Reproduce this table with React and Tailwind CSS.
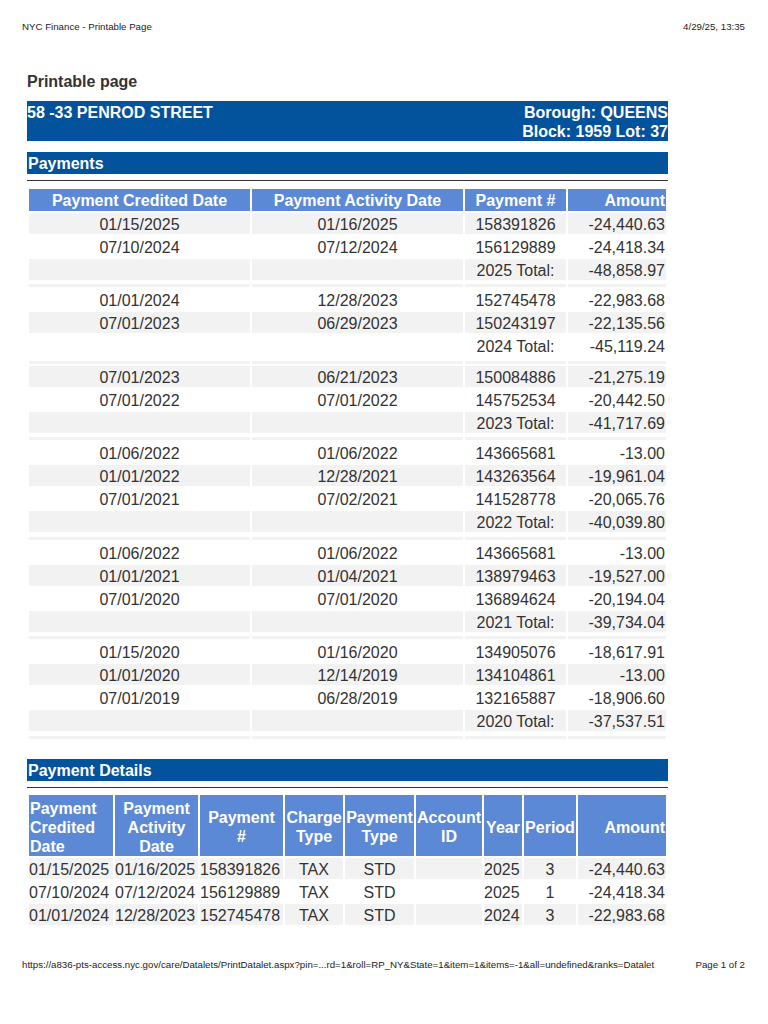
import React from 'react';

const groups = [
  {
    year: '2025',
    total: '-48,858.97',
    rows: [
      ['01/15/2025', '01/16/2025', '158391826', '-24,440.63'],
      ['07/10/2024', '07/12/2024', '156129889', '-24,418.34'],
    ],
    start: 'gray',
    gap: 'h-[5px]',
  },
  {
    year: '2024',
    total: '-45,119.24',
    rows: [
      ['01/01/2024', '12/28/2023', '152745478', '-22,983.68'],
      ['07/01/2023', '06/29/2023', '150243197', '-22,135.56'],
    ],
    start: 'white',
    gap: 'h-[6px]',
  },
  {
    year: '2023',
    total: '-41,717.69',
    rows: [
      ['07/01/2023', '06/21/2023', '150084886', '-21,275.19'],
      ['07/01/2022', '07/01/2022', '145752534', '-20,442.50'],
    ],
    start: 'gray',
    gap: 'h-[5px]',
  },
  {
    year: '2022',
    total: '-40,039.80',
    rows: [
      ['01/06/2022', '01/06/2022', '143665681', '-13.00'],
      ['01/01/2022', '12/28/2021', '143263564', '-19,961.04'],
      ['07/01/2021', '07/02/2021', '141528778', '-20,065.76'],
    ],
    start: 'white',
    gap: 'h-[6px]',
  },
  {
    year: '2021',
    total: '-39,734.04',
    rows: [
      ['01/06/2022', '01/06/2022', '143665681', '-13.00'],
      ['01/01/2021', '01/04/2021', '138979463', '-19,527.00'],
      ['07/01/2020', '07/01/2020', '136894624', '-20,194.04'],
    ],
    start: 'white',
    gap: 'h-[5px]',
  },
  {
    year: '2020',
    total: '-37,537.51',
    rows: [
      ['01/15/2020', '01/16/2020', '134905076', '-18,617.91'],
      ['01/01/2020', '12/14/2019', '134104861', '-13.00'],
      ['07/01/2019', '06/28/2019', '132165887', '-18,906.60'],
    ],
    start: 'white',
    gap: 'h-[6px]',
  },
];

const details = [
  ['01/15/2025', '01/16/2025', '158391826', 'TAX', 'STD', '', '2025', '3', '-24,440.63'],
  ['07/10/2024', '07/12/2024', '156129889', 'TAX', 'STD', '', '2025', '1', '-24,418.34'],
  ['01/01/2024', '12/28/2023', '152745478', 'TAX', 'STD', '', '2024', '3', '-22,983.68'],
];

// dark blue title strip with the thin rule under it
const SectionBar = ({ title }) => (
  <div>
    <div className="h-[22px] bg-[#03529c] text-white font-bold text-[16px] leading-[20px] pt-[2px] pl-px">
      {title}
    </div>
    <div className="mt-[6px] border-t border-[#333333]"></div>
  </div>
);

const PaymentsTable = () => {
  const body = [];
  groups.forEach((g) => {
    let gray = g.start === 'gray';
    g.rows.forEach((r, i) => {
      const bg = gray ? 'bg-[#f2f2f2]' : 'bg-white';
      body.push(
        <tr key={g.year + i} className="h-[21px] leading-[19px]">
          <td className={`${bg} text-center pt-[2px]`}>{r[0]}</td>
          <td className={`${bg} text-center pt-[2px]`}>{r[1]}</td>
          <td className={`${bg} text-center pt-[2px]`}>{r[2]}</td>
          <td className={`${bg} text-right pr-[1px] pt-[2px]`}>{r[3]}</td>
        </tr>
      );
      gray = !gray;
    });
    const tbg = gray ? 'bg-[#f2f2f2]' : 'bg-white';
    body.push(
      <tr key={g.year + 't'} className="h-[21px] leading-[19px]">
        <td className={tbg}></td>
        <td className={tbg}></td>
        <td className={`${tbg} text-center pt-[2px]`}>{g.year} Total:</td>
        <td className={`${tbg} text-right pr-[1px] pt-[2px]`}>{g.total}</td>
      </tr>
    );
    body.push(
      <tr key={g.year + 's'}>
        {[0, 1, 2, 3].map((c) => (
          <td key={c} className={`p-0 ${g.gap}`}>
            <div className={`${g.gap} flex flex-col justify-end`}>
              <div className="h-[3px] bg-[#f2f2f2]"></div>
            </div>
          </td>
        ))}
      </tr>
    );
  });

  return (
    <table className="mt-[6px] w-[641px] table-fixed border-separate border-spacing-[2px] text-[16px] text-[#333333]">
      <colgroup>
        <col className="w-[221px]" />
        <col className="w-[211px]" />
        <col className="w-[101px]" />
        <col className="w-[98px]" />
      </colgroup>
      <thead>
        <tr className="h-[22px] leading-[20px] text-white font-bold">
          <th className="bg-[#5b89d6] text-center pt-[2px]">Payment Credited Date</th>
          <th className="bg-[#5b89d6] text-center pt-[2px]">Payment Activity Date</th>
          <th className="bg-[#5b89d6] text-center pt-[2px]">Payment #</th>
          <th className="bg-[#5b89d6] text-right pr-[1px] pt-[2px]">Amount</th>
        </tr>
      </thead>
      <tbody>{body}</tbody>
    </table>
  );
};

const DetailsTable = () => {
  const align = ['text-left', 'text-left', 'text-left', 'text-center', 'text-center', 'text-center', 'text-left', 'text-center', 'text-right'];
  return (
    <table className="mt-[5px] w-[641px] table-fixed border-separate border-spacing-[2px] text-[16px] text-[#333333]">
      <colgroup>
        <col className="w-[84px]" />
        <col className="w-[83px]" />
        <col className="w-[83px]" />
        <col className="w-[58px]" />
        <col className="w-[69px]" />
        <col className="w-[66px]" />
        <col className="w-[38px]" />
        <col className="w-[52px]" />
        <col className="w-[88px]" />
      </colgroup>
      <thead>
        <tr className="h-[61px] leading-[19px] text-white font-bold">
          <th className="bg-[#5b89d6] text-left pl-px pt-[3px]">Payment<br />Credited<br />Date</th>
          <th className="bg-[#5b89d6] text-center pt-[3px]">Payment<br />Activity<br />Date</th>
          <th className="bg-[#5b89d6] text-center pt-[3px]">Payment<br />#</th>
          <th className="bg-[#5b89d6] text-center pt-[3px]">Charge<br />Type</th>
          <th className="bg-[#5b89d6] text-center pt-[3px] whitespace-nowrap">Payment<br />Type</th>
          <th className="bg-[#5b89d6] text-center pt-[3px]">Account<br />ID</th>
          <th className="bg-[#5b89d6] text-center pt-[3px]">Year</th>
          <th className="bg-[#5b89d6] text-center pt-[3px]">Period</th>
          <th className="bg-[#5b89d6] text-right pr-px pt-[3px]">Amount</th>
        </tr>
      </thead>
      <tbody>
        {details.map((r, i) => {
          const bg = i % 2 === 0 ? 'bg-[#f2f2f2]' : 'bg-white';
          return (
            <tr key={i} className="h-[21px] leading-[18px]">
              {r.map((v, j) => (
                <td key={j} className={`${bg} ${align[j]} ${j === 8 ? 'pr-px' : ''} pt-[3px] whitespace-nowrap`}>
                  {v}
                </td>
              ))}
            </tr>
          );
        })}
      </tbody>
    </table>
  );
};

export default function App() {
  return (
    <div className="h-[1024px] w-[768px] bg-white flex flex-col font-['Liberation_Sans',Arial,sans-serif] overflow-hidden">
      {/* print header */}
      <div className="h-[54px] flex items-center justify-between pl-[22px] pr-[23px] text-[9.7px] text-[#222222]">
        <span>NYC Finance - Printable Page</span>
        <span>4/29/25, 13:35</span>
      </div>

      <div className="ml-[27px] w-[641px]">
        <h1 className="mt-[17px] pt-px text-[16px] leading-[20px] font-bold text-[#333333]">Printable page</h1>

        {/* address */}
        <div className="mt-[9px] h-[40px] pt-[2px] bg-[#03529c] text-white font-bold text-[16px] leading-[19px] flex justify-between">
          <div>58 -33 PENROD STREET</div>
          <div className="text-right">
            <div>Borough: QUEENS</div>
            <div>Block: 1959 Lot: 37</div>
          </div>
        </div>

        <div className="mt-[11px]">
          <SectionBar title="Payments" />
          <PaymentsTable />
        </div>

        <div className="mt-[18px]">
          <SectionBar title="Payment Details" />
          <DetailsTable />
        </div>
      </div>

      {/* print footer */}
      <div className="mt-auto mb-[49px] h-[20px] flex items-center justify-between pl-[22px] pr-[23px] text-[9.7px] text-[#222222]">
        <span>https://a836-pts-access.nyc.gov/care/Datalets/PrintDatalet.aspx?pin=...rd=1&amp;roll=RP_NY&amp;State=1&amp;item=1&amp;items=-1&amp;all=undefined&amp;ranks=Datalet</span>
        <span>Page 1 of 2</span>
      </div>
    </div>
  );
}
